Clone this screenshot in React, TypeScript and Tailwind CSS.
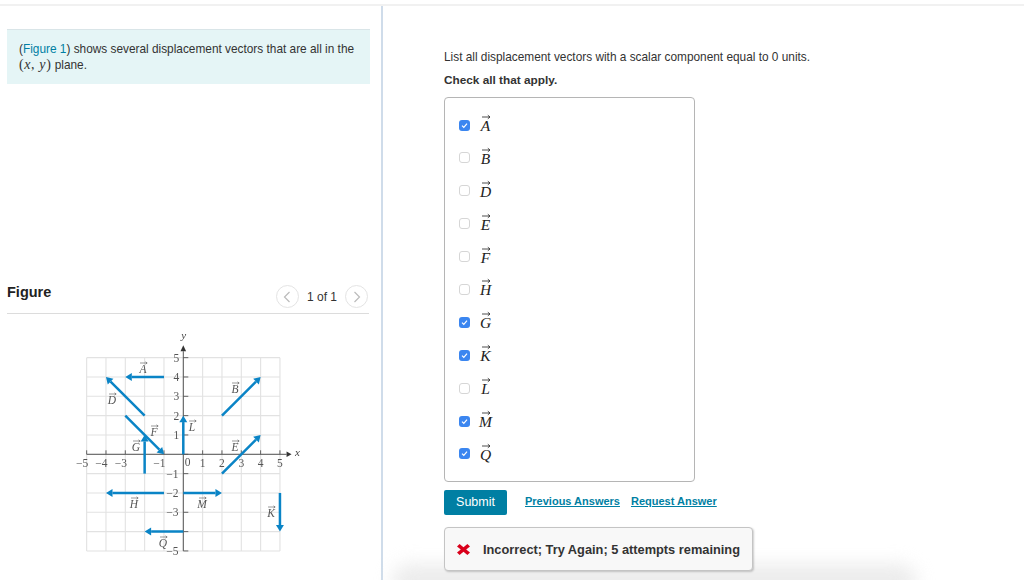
const sans = { fontFamily: '"Liberation Sans", Arial, sans-serif' };

type Vec = { x1: number; y1: number; x2: number; y2: number };

const vectors: Vec[] = [
  { x1: -1, y1: 4, x2: -3, y2: 4 },
  { x1: -2, y1: 2, x2: -4, y2: 4 },
  { x1: -3, y1: 2, x2: -1, y2: 0 },
  { x1: -2, y1: -1, x2: -2, y2: 1 },
  { x1: 0, y1: 0, x2: 0, y2: 2 },
  { x1: 2, y1: 2, x2: 4, y2: 4 },
  { x1: 2, y1: -1, x2: 4, y2: 1 },
  { x1: -1, y1: -2, x2: -4, y2: -2 },
  { x1: 0, y1: -2, x2: 2, y2: -2 },
  { x1: 5, y1: -2, x2: 5, y2: -4 },
  { x1: 0, y1: -4, x2: -2, y2: -4 },
];

const U = 19.33;
const OX = 113.3; // origin inside the svg box
const OY = 124.3;
const px = (v: number) => OX + v * U;
const py = (v: number) => OY - v * U;

const labels = [
  { t: "A", x: 73, y: 43 },
  { t: "B", x: 165, y: 63 },
  { t: "D", x: 42, y: 74 },
  { t: "E", x: 165, y: 121 },
  { t: "F", x: 84, y: 106 },
  { t: "G", x: 66, y: 121 },
  { t: "H", x: 64, y: 178 },
  { t: "K", x: 201, y: 187 },
  { t: "L", x: 122, y: 101 },
  { t: "M", x: 132, y: 178 },
  { t: "Q", x: 93, y: 217 },
];

function Chart() {
  const xs = [-5, -4, -3, -2, -1, 0, 1, 2, 3, 4, 5];
  const axisTop = py(5.33);
  const axisEnd = px(5.6) - 5;
  return (
    <svg width="240" height="240" viewBox="0 0 240 240" className="block blur-[0.35px]">
      {xs.map((v) => (
        <g key={v} stroke="#e2e2e2" strokeWidth="1.1">
          <line x1={px(v)} y1={py(5)} x2={px(v)} y2={py(-5)} />
          <line x1={px(-5)} y1={py(v)} x2={px(5)} y2={py(v)} />
        </g>
      ))}
      {/* axes */}
      <line x1={px(-5)} y1={OY} x2={axisEnd} y2={OY} stroke="#555" strokeWidth="1" />
      <path d={`M${axisEnd} ${OY - 2.8}L${axisEnd + 5} ${OY}L${axisEnd} ${OY + 2.8}Z`} fill="#333" />
      <line x1={OX} y1={py(-5)} x2={OX} y2={axisTop} stroke="#555" strokeWidth="1" />
      <path d={`M${OX - 2.8} ${axisTop}L${OX} ${axisTop - 6}L${OX + 2.8} ${axisTop}Z`} fill="#333" />
      {xs.map((v) => (
        <g key={v} stroke="#555" strokeWidth="0.9">
          <line x1={px(v)} y1={OY} x2={px(v)} y2={OY - 4} />
          <line x1={OX} y1={py(v)} x2={OX + 5} y2={py(v)} />
        </g>
      ))}
      {/* tick numbers */}
      <g fill="#555" fontSize="11.5" fontFamily='"Liberation Serif", serif' textAnchor="middle">
        {[-5, -4, -3, -1, 1, 2, 3, 4, 5].map((v) => (
          <text key={v} x={px(v) - (v < 0 ? 4.5 : 0)} y={OY + 12.4}>
            {v < 0 ? `\u2212${-v}` : v}
          </text>
        ))}
        <text x={OX + 4.4} y={OY + 11.5}>0</text>
        {[1, 2, 3, 4, 5].map((v) => (
          <text key={v} x={OX - 7} y={py(v) + 4}>{v}</text>
        ))}
        {[-1, -2, -3, -5].map((v) => (
          <text key={v} x={OX - 11} y={py(v) + 4}>{`\u2212${-v}`}</text>
        ))}
      </g>
      <g fill="#444" fontSize="11" fontStyle="italic" fontFamily='"Liberation Serif", serif'>
        <text x={OX - 2} y={9}>y</text>
        <text x={225} y={OY + 2}>x</text>
      </g>
      {/* vectors */}
      {vectors.map((v, i) => {
        const x1 = px(v.x1);
        const y1 = py(v.y1);
        const x2 = px(v.x2);
        const y2 = py(v.y2);
        const a = Math.atan2(y2 - y1, x2 - x1);
        const back = 6.5;
        const bx = x2 - back * Math.cos(a);
        const by = y2 - back * Math.sin(a);
        const nx = -Math.sin(a) * 4;
        const ny = Math.cos(a) * 4;
        return (
          <g key={i}>
            <line x1={x1} y1={y1} x2={bx} y2={by} stroke="#0a84c6" strokeWidth="2.5" />
            <path d={`M${x2} ${y2}L${bx + nx} ${by + ny}L${bx - nx} ${by - ny}Z`} fill="#0a84c6" />
          </g>
        );
      })}
      {/* vector names */}
      <g fill="#555" fontSize="11.5" fontStyle="italic" fontFamily='"Liberation Serif", serif' textAnchor="middle">
        {labels.map((l) => (
          <g key={l.t}>
            <text x={l.x} y={l.y}>{l.t}</text>
            <path d={`M${l.x - 3} ${l.y - 10}H${l.x + 4}M${l.x + 2.5} ${l.y - 11.2}L${l.x + 4.2} ${l.y - 10}L${l.x + 2.5} ${l.y - 8.8}`} fill="none" stroke="#555" strokeWidth="0.6" />
          </g>
        ))}
      </g>
    </svg>
  );
}

function VecName({ name }: { name: string }) {
  return (
    <span
      className="relative top-[1px] inline-block w-[14px] text-center text-[15.5px] italic leading-[18px] text-[#222]"
      style={{ fontFamily: '"Liberation Serif", serif' }}
    >
      {name}
      <svg width="10" height="6" viewBox="0 0 10 6" className="absolute left-[2px] top-[-3px]">
        <path d="M1 3H9M6.8 1.2L9 3L6.8 4.8" fill="none" stroke="#222" strokeWidth="0.8" />
      </svg>
    </span>
  );
}

const options = [
  { name: "A", on: true },
  { name: "B", on: false },
  { name: "D", on: false },
  { name: "E", on: false },
  { name: "F", on: false },
  { name: "H", on: false },
  { name: "G", on: true },
  { name: "K", on: true },
  { name: "L", on: false },
  { name: "M", on: true },
  { name: "Q", on: true },
];

function Check({ on }: { on: boolean }) {
  if (on) {
    return (
      <span className="flex h-[11px] w-[11px] items-center justify-center rounded-[3px] bg-[#3b86f0]">
        <svg width="9" height="9" viewBox="0 0 9 9">
          <path d="M2 4.6L3.8 6.4L7 2.6" fill="none" stroke="#fff" strokeWidth="1.2" />
        </svg>
      </span>
    );
  }
  return <span className="block h-[11px] w-[11px] rounded-[3px] border-[1.5px] border-[#d6d6d6] bg-white" />;
}

export default function App() {
  return (
    <div className="relative flex h-[580px] w-[1024px] flex-col overflow-hidden bg-white text-[#333]" style={sans}>
      <div className="h-[6px] w-full shrink-0 border-b-2 border-[#f1f1f1] bg-white" />
      <div className="flex min-h-0 flex-1">
        {/* left panel */}
        <div className="w-[383px] shrink-0 border-r-2 border-[#cfdcea] pl-[7px] pr-[12px]">
          <div className="mt-[23px] h-[55px] w-[363px] border-t border-[#d9e5e8] bg-[#e5f5f6] pl-[12px] pt-[11px] text-[11.85px] leading-[16px]">
            <p>
              (<span className="text-[#007fa3]">Figure 1</span>) shows several displacement vectors that are all in the
            </p>
            <p>
              <span className="text-[14px] tracking-[0.6px]" style={{ fontFamily: '"Liberation Serif", serif' }}>
                (<i>x</i>, <i>y</i>)
              </span>{" "}
              plane.
            </p>
          </div>
          <div className="mt-[196px] flex h-[34px] w-[362px] items-center justify-between border-b border-[#dcdcdc] pb-[7px]">
            <span className="text-[14.5px] font-bold text-[#222]">Figure</span>
            <div className="flex items-center gap-[8px] pt-[7px] pr-[1px]">
              <span className="flex h-[23px] w-[23px] items-center justify-center rounded-full border border-[#e4e4e4]">
                <svg width="8" height="12" viewBox="0 0 8 12">
                  <path d="M6.5 1L1.5 6L6.5 11" fill="none" stroke="#bbb" strokeWidth="1.2" />
                </svg>
              </span>
              <span className="text-[12px] text-[#333]">1 of 1</span>
              <span className="flex h-[23px] w-[23px] items-center justify-center rounded-full border border-[#e4e4e4]">
                <svg width="8" height="12" viewBox="0 0 8 12">
                  <path d="M1.5 1L6.5 6L1.5 11" fill="none" stroke="#bbb" strokeWidth="1.2" />
                </svg>
              </span>
            </div>
          </div>
          <div className="ml-[63px] mt-[16px]">
            <Chart />
          </div>
        </div>

        {/* right panel */}
        <div className="pl-[60.5px] pt-[43px]">
          <p className="pl-[0.5px] text-[11.85px] leading-[16px]">List all displacement vectors with a scalar component equal to 0 units.</p>
          <p className="mt-[7px] pl-[0.5px] text-[11.8px] font-bold leading-[16px]">Check all that apply.</p>
          <div className="mt-[9px] flex h-[385px] w-[251px] flex-col gap-[14.9px] rounded-[4px] border border-[#b5b5b5] pl-[14px] pt-[18px]">
            {options.map((o) => (
              <div key={o.name} className="flex h-[18px] items-center gap-[9px]">
                <Check on={o.on} />
                <VecName name={o.name} />
              </div>
            ))}
          </div>
          <div className="mt-[8px] flex items-center pl-[0.5px]">
            <button className="h-[25px] w-[63px] rounded-[2px] bg-[#007fa3] text-[12.5px] text-white">Submit</button>
            <a className="ml-[18px] mb-[3px] text-[11px] font-bold text-[#007fa3] underline">Previous Answers</a>
            <a className="ml-[11px] mb-[3px] text-[11px] font-bold text-[#007fa3] underline">Request Answer</a>
          </div>
          <div className="relative z-10 mt-[12px] ml-[0.5px] flex h-[44px] w-[309px] items-center rounded-[4px] border border-[#c4c4c4] bg-[#f8f8f8] pl-[11px] pt-[1px] shadow-[1px_1px_2px_rgba(0,0,0,0.2)]">
            <svg width="15" height="13" viewBox="0 0 15 13">
              <path d="M3.6 1L7.5 4.3L11.4 1L14 3.4L10.2 6.5L14 9.6L11.4 12L7.5 8.7L3.6 12L1 9.6L4.8 6.5L1 3.4Z" fill="#d9001b" />
            </svg>
            <span className="ml-[12px] text-[12.8px] font-bold text-[#333]">Incorrect; Try Again; 5 attempts remaining</span>
          </div>
        </div>
      </div>
      {/* soft glow along the bottom edge */}
      <div className="pointer-events-none absolute bottom-[-20px] left-[392px] h-[36px] w-[525px] rounded-[30px] bg-[#e4e4e4] opacity-70 blur-[9px]" />
    </div>
  );
}
